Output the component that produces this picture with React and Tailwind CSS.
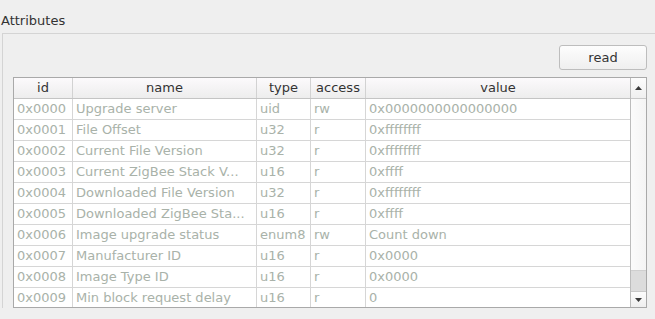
import React from 'react';

const rows = [
    ['0x0000', 'Upgrade server', 'uid', 'rw', '0x0000000000000000'],
    ['0x0001', 'File Offset', 'u32', 'r', '0xffffffff'],
    ['0x0002', 'Current File Version', 'u32', 'r', '0xffffffff'],
    ['0x0003', 'Current ZigBee Stack V...', 'u16', 'r', '0xffff'],
    ['0x0004', 'Downloaded File Version', 'u32', 'r', '0xffffffff'],
    ['0x0005', 'Downloaded ZigBee Sta...', 'u16', 'r', '0xffff'],
    ['0x0006', 'Image upgrade status', 'enum8', 'rw', 'Count down'],
    ['0x0007', 'Manufacturer ID', 'u16', 'r', '0x0000'],
    ['0x0008', 'Image Type ID', 'u16', 'r', '0x0000'],
    ['0x0009', 'Min block request delay', 'u16', 'r', '0'],
];

const cols = ['w-[59px]', 'w-[184px]', 'w-[54px]', 'w-[55px]'];
const heads = ['id', 'name', 'type', 'access'];

const App = () => {
    return (
        <div className="w-[655px] h-[319px] overflow-hidden bg-[#efefef] font-['DejaVu_Sans',sans-serif] text-[13px] text-[#333333]">
            <div className="h-[33px] pl-[1px] pt-[12px] leading-[17px]">Attributes</div>

            {/* group box */}
            <div className="ml-[2px] w-[700px] border-l border-t border-[#d4d4d4] pt-[11px] pl-[10px]">
                <div className="w-[634px] flex justify-end">
                    <button className="w-[88px] h-[25px] rounded-[3px] border border-[#bdbdbd] bg-gradient-to-b from-[#fdfdfd] to-[#efefef] text-[13px] text-[#333333] leading-none">
                        read
                    </button>
                </div>

                <div className="mt-[7px] w-[634px] h-[231px] border border-[#a9a9a9] flex overflow-hidden">
                    <div className="flex-1 flex flex-col overflow-hidden">
                        {/* header */}
                        <div className="flex h-[21px] shrink-0 border-b border-[#c4c4c4] bg-gradient-to-b from-[#fcfafc] to-[#ededed] leading-[20px]">
                            {heads.map((h, i) => (
                                <div key={h} className={`${cols[i]} shrink-0 border-r border-[#d2d2d2] text-center`}>{h}</div>
                            ))}
                            <div className="flex-1 text-center">value</div>
                        </div>
                        {/* body */}
                        <div className="flex-1 overflow-hidden bg-white">
                            {rows.map((r) => (
                                <div key={r[0]} className="flex h-[21px] border-b border-[#d6d6d6] leading-[20px] text-[#a9b2a9] whitespace-nowrap">
                                    {r.slice(0, 4).map((c, i) => (
                                        <div key={i} className={`${cols[i]} shrink-0 border-r border-[#d6d6d6] pl-[3px] overflow-hidden`}>{c}</div>
                                    ))}
                                    <div className="flex-1 pl-[3px]">{r[4]}</div>
                                </div>
                            ))}
                        </div>
                    </div>

                    {/* scrollbar */}
                    <div className="w-[16px] shrink-0 border-l border-[#bcbcbc] flex flex-col bg-[#dcdcdc]">
                        <div className="h-[21px] shrink-0 border-b border-[#c8c8c8] bg-gradient-to-b from-[#fcfcfc] to-[#efefef] flex items-center justify-center">
                            <svg width="7" height="4" viewBox="0 0 7 4"><path d="M3.5 0 L7 4 L0 4 Z" fill="#3a3a3a" /></svg>
                        </div>
                        <div className="h-[172px] shrink-0 bg-gradient-to-r from-[#fbfbfb] to-[#f4f4f4] border-b border-[#cfcfcf]" />
                        <div className="flex-1" />
                        <div className="h-[16px] shrink-0 border-t border-[#c8c8c8] bg-gradient-to-b from-[#fcfcfc] to-[#efefef] flex items-center justify-center">
                            <svg width="7" height="4" viewBox="0 0 7 4"><path d="M0 0 L7 0 L3.5 4 Z" fill="#3a3a3a" /></svg>
                        </div>
                    </div>
                </div>
            </div>
        </div>
    );
};

export default App;
